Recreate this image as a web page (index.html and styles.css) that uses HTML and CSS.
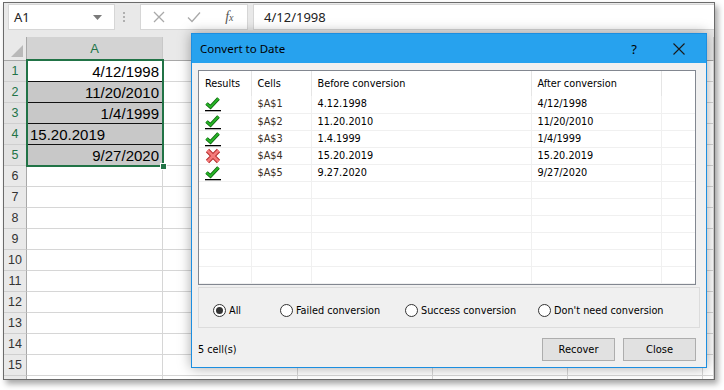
FILE: index.html
```html
<!DOCTYPE html>
<html>
<head>
<meta charset="utf-8">
<link rel="stylesheet" href="styles.css">
</head>
<body>
<div class="win">
  <div class="fbar">
    <div class="namebox"><span>A1</span><svg width="9" height="5" viewBox="0 0 9 5"><path d="M0 0 L9 0 L4.5 5 Z" fill="#7a7a7a"/></svg></div>
    <div class="dots"><i></i><i></i><i></i></div>
    <div class="fbtns">
      <span class="fb"><svg width="12" height="12" viewBox="0 0 12 12"><path d="M1 1 L11 11 M11 1 L1 11" stroke="#a9a9a9" stroke-width="1.3"/></svg></span>
      <span class="fb"><svg width="14" height="12" viewBox="0 0 14 12"><path d="M1 6.5 L5 10.5 L13 1.5" fill="none" stroke="#a9a9a9" stroke-width="1.3"/></svg></span>
      <span class="fb fx">f<sub>x</sub></span>
    </div>
    <div class="formula">4/12/1998</div>
  </div>
  <div class="sheet">
    <div class="row head">
      <div class="rh corner"><svg width="12" height="12" viewBox="0 0 12 12"><path d="M12 0 L12 12 L0 12 Z" fill="#b9b9b9"/></svg></div>
      <div class="c ca hsel">A</div><div class="c cb"></div><div class="c cb"></div><div class="c cb"></div><div class="c cb"></div><div class="c cf"></div>
    </div>
    <div class="row"><div class="rh rsel">1</div><div class="c ca act r line">4/12/1998</div><div class="c cb"></div><div class="c cb"></div><div class="c cb"></div><div class="c cb"></div><div class="c cf"></div></div>
    <div class="row"><div class="rh rsel">2</div><div class="c ca gsel r line">11/20/2010</div><div class="c cb"></div><div class="c cb"></div><div class="c cb"></div><div class="c cb"></div><div class="c cf"></div></div>
    <div class="row"><div class="rh rsel">3</div><div class="c ca gsel r line">1/4/1999</div><div class="c cb"></div><div class="c cb"></div><div class="c cb"></div><div class="c cb"></div><div class="c cf"></div></div>
    <div class="row"><div class="rh rsel">4</div><div class="c ca gsel line">15.20.2019</div><div class="c cb"></div><div class="c cb"></div><div class="c cb"></div><div class="c cb"></div><div class="c cf"></div></div>
    <div class="row"><div class="rh rsel">5</div><div class="c ca gsel r">9/27/2020</div><div class="c cb"></div><div class="c cb"></div><div class="c cb"></div><div class="c cb"></div><div class="c cf"></div></div>
    <div class="row"><div class="rh">6</div><div class="c ca"></div><div class="c cb"></div><div class="c cb"></div><div class="c cb"></div><div class="c cb"></div><div class="c cf"></div></div>
    <div class="row"><div class="rh">7</div><div class="c ca"></div><div class="c cb"></div><div class="c cb"></div><div class="c cb"></div><div class="c cb"></div><div class="c cf"></div></div>
    <div class="row"><div class="rh">8</div><div class="c ca"></div><div class="c cb"></div><div class="c cb"></div><div class="c cb"></div><div class="c cb"></div><div class="c cf"></div></div>
    <div class="row"><div class="rh">9</div><div class="c ca"></div><div class="c cb"></div><div class="c cb"></div><div class="c cb"></div><div class="c cb"></div><div class="c cf"></div></div>
    <div class="row"><div class="rh">10</div><div class="c ca"></div><div class="c cb"></div><div class="c cb"></div><div class="c cb"></div><div class="c cb"></div><div class="c cf"></div></div>
    <div class="row"><div class="rh">11</div><div class="c ca"></div><div class="c cb"></div><div class="c cb"></div><div class="c cb"></div><div class="c cb"></div><div class="c cf"></div></div>
    <div class="row"><div class="rh">12</div><div class="c ca"></div><div class="c cb"></div><div class="c cb"></div><div class="c cb"></div><div class="c cb"></div><div class="c cf"></div></div>
    <div class="row"><div class="rh">13</div><div class="c ca"></div><div class="c cb"></div><div class="c cb"></div><div class="c cb"></div><div class="c cb"></div><div class="c cf"></div></div>
    <div class="row"><div class="rh">14</div><div class="c ca"></div><div class="c cb"></div><div class="c cb"></div><div class="c cb"></div><div class="c cb"></div><div class="c cf"></div></div>
    <div class="row"><div class="rh">15</div><div class="c ca"></div><div class="c cb"></div><div class="c cb"></div><div class="c cb"></div><div class="c cb"></div><div class="c cf"></div></div>
    <div class="row"><div class="rh"></div><div class="c ca"></div><div class="c cb"></div><div class="c cb"></div><div class="c cb"></div><div class="c cb"></div><div class="c cf"></div></div>
    <div class="selbox"><span class="handle"></span></div>
  </div>
</div>

<div class="dlg">
  <div class="title">
    <span>Convert to Date</span>
    <span class="help">?</span>
    <svg class="close" width="12" height="12" viewBox="0 0 12 12"><path d="M0.5 0.5 L11.5 11.5 M11.5 0.5 L0.5 11.5" stroke="#1a1a1a" stroke-width="1.1"/></svg>
  </div>
  <div class="list">
    <table>
      <colgroup><col class="w1"><col class="w2"><col class="w3"><col class="w4"><col class="w5"></colgroup>
      <thead><tr><th>Results</th><th>Cells</th><th>Before conversion</th><th>After conversion</th><th></th></tr></thead>
      <tbody>
        <tr><td><svg class="ok" width="16" height="16" viewBox="0 0 16 16"><path d="M1.5 7.5 L5.5 11 L13.5 2.5" fill="none" stroke="#0b5e0b" stroke-width="3.6"/><path d="M1.5 7.5 L5.5 11 L13.5 2.5" fill="none" stroke="#27b427" stroke-width="2"/><rect x="0" y="14" width="16" height="1.3" fill="#000"/></svg></td><td class="ref">$A$1</td><td>4.12.1998</td><td>4/12/1998</td><td></td></tr>
        <tr><td><svg class="ok" width="16" height="16" viewBox="0 0 16 16"><path d="M1.5 7.5 L5.5 11 L13.5 2.5" fill="none" stroke="#0b5e0b" stroke-width="3.6"/><path d="M1.5 7.5 L5.5 11 L13.5 2.5" fill="none" stroke="#27b427" stroke-width="2"/><rect x="0" y="14" width="16" height="1.3" fill="#000"/></svg></td><td class="ref">$A$2</td><td>11.20.2010</td><td>11/20/2010</td><td></td></tr>
        <tr><td><svg class="ok" width="16" height="16" viewBox="0 0 16 16"><path d="M1.5 7.5 L5.5 11 L13.5 2.5" fill="none" stroke="#0b5e0b" stroke-width="3.6"/><path d="M1.5 7.5 L5.5 11 L13.5 2.5" fill="none" stroke="#27b427" stroke-width="2"/><rect x="0" y="14" width="16" height="1.3" fill="#000"/></svg></td><td class="ref">$A$3</td><td>1.4.1999</td><td>1/4/1999</td><td></td></tr>
        <tr><td><svg class="ok" width="16" height="16" viewBox="0 0 16 16"><path d="M2.5 2.5 L13.5 13.5 M13.5 2.5 L2.5 13.5" stroke="#b52a2a" stroke-width="4.6"/><path d="M2.5 2.5 L13.5 13.5 M13.5 2.5 L2.5 13.5" stroke="#f47a7a" stroke-width="2.8"/></svg></td><td class="ref">$A$4</td><td>15.20.2019</td><td>15.20.2019</td><td></td></tr>
        <tr><td><svg class="ok" width="16" height="16" viewBox="0 0 16 16"><path d="M1.5 7.5 L5.5 11 L13.5 2.5" fill="none" stroke="#0b5e0b" stroke-width="3.6"/><path d="M1.5 7.5 L5.5 11 L13.5 2.5" fill="none" stroke="#27b427" stroke-width="2"/><rect x="0" y="14" width="16" height="1.3" fill="#000"/></svg></td><td class="ref">$A$5</td><td>9.27.2020</td><td>9/27/2020</td><td></td></tr>
        <tr><td></td><td></td><td></td><td></td><td></td></tr>
        <tr><td></td><td></td><td></td><td></td><td></td></tr>
        <tr><td></td><td></td><td></td><td></td><td></td></tr>
        <tr><td></td><td></td><td></td><td></td><td></td></tr>
        <tr><td></td><td></td><td></td><td></td><td></td></tr>
        <tr><td></td><td></td><td></td><td></td><td></td></tr>
      </tbody>
    </table>
  </div>
  <div class="group">
    <label class="radio r1"><span class="dot on"></span>All</label>
    <label class="radio r2"><span class="dot"></span>Failed conversion</label>
    <label class="radio r3"><span class="dot"></span>Success conversion</label>
    <label class="radio r4"><span class="dot"></span>Don't need conversion</label>
  </div>
  <div class="footer">
    <span>5 cell(s)</span>
    <button class="btn first">Recover</button>
    <button class="btn">Close</button>
  </div>
</div>
</body>
</html>
```

FILE: styles.css
```css
* { box-sizing: border-box; }
body {
  margin: 0;
  background: #fff;
  position: relative;
  width: 724px;
  height: 390px;
  overflow: hidden;
  font-family: "Liberation Sans", sans-serif;
}
.win {
  margin: 2px 0 0 3px;
  width: 712px;
  height: 378px;
  border: 1px solid #6b6b6b;
  box-shadow: 3px 4px 6px rgba(0,0,0,0.35);
  overflow: hidden;
  background: #fff;
  position: relative;
}
.fbar {
  height: 34px;
  background: #e9e9e9;
  display: flex;
  align-items: flex-start;
  padding: 1px 0 0 4px;
}
.namebox {
  width: 107px;
  height: 26px;
  background: #fff;
  border: 1px solid #d6d6d6;
  display: flex;
  align-items: center;
  justify-content: space-between;
  padding: 0 12px 0 5px;
  font: 13px "Noto Sans", sans-serif;
  color: #222;
}
.dots {
  width: 25px;
  height: 26px;
  display: flex;
  flex-direction: column;
  align-items: center;
  justify-content: center;
  gap: 2px;
  padding-right: 7px;
}
.dots i { width: 2px; height: 2px; background: #b0b0b0; display: block; }
.fbtns {
  width: 108px;
  height: 26px;
  background: #fff;
  border: 1px solid #d6d6d6;
  display: flex;
  align-items: center;
}
.fb { width: 36px; display: flex; justify-content: center; align-items: center; }
.fx { font: italic 14px "Liberation Serif", serif; color: #555; }
.fx sub { font-size: 10px; vertical-align: -1px; }
.formula {
  flex: 1;
  margin-left: 5px;
  height: 26px;
  background: #fff;
  border: 1px solid #d6d6d6;
  border-right: none;
  padding-left: 10px;
  font: 13px/24px "Noto Sans", sans-serif;
  color: #222;
}
.sheet { position: relative; }
.row { display: flex; height: 21px; }
.row.head { height: 24px; }
.rh {
  width: 23px;
  flex: none;
  background: #e9e9e9;
  border-right: 1px solid #a8a8a8;
  border-bottom: 1px solid #cfcfcf;
  font: 12.5px/21px "Liberation Sans", sans-serif;
  color: #333;
  text-align: center;
}
.rh.rsel { color: #217346; background: #e2e2e2; }
.corner {
  background: #e9e9e9;
  border-bottom: 1px solid #a8a8a8;
  display: flex;
  align-items: flex-end;
  justify-content: flex-end;
  padding: 0 3px 3px 0;
}
.c {
  border-right: 1px solid #d6d6d6;
  border-bottom: 1px solid #d6d6d6;
  font: 15px/21px "Liberation Sans", sans-serif;
  color: #000;
  padding: 0 3px;
  white-space: nowrap;
  overflow: hidden;
}
.ca { width: 136px; flex: none; }
.cb { width: 135px; flex: none; }
.cf { flex: 1; }
.head .c {
  background: #e9e9e9;
  border-bottom: 1px solid #a8a8a8;
  border-right: 1px solid #c8c8c8;
  font: 13px/23px "Liberation Sans", sans-serif;
  text-align: center;
  color: #333;
}
.head .c.hsel {
  background: #d3d3d3;
  color: #217346;
  border-bottom: 2px solid #217346;
}
.r { text-align: right; }
.gsel { background: #c8c8c8; }
.act { background: #fff; }
.line { border-bottom: 1px solid #111; }
.selbox {
  position: absolute;
  left: 22px;
  top: 22px;
  width: 138px;
  height: 108px;
  border: 2px solid #217346;
}
.handle {
  position: absolute;
  right: -5px;
  bottom: -5px;
  width: 7px;
  height: 7px;
  background: #217346;
  border: 1px solid #fff;
}

.dlg {
  position: absolute;
  left: 191px;
  top: 33px;
  width: 516px;
  height: 335px;
  background: #f0f0f0;
  border: 1px solid #1c8ee0;
  box-shadow: 0 0 12px rgba(0,0,0,0.35);
  font: 10.8px "DejaVu Sans Condensed", "DejaVu Sans", sans-serif;
  color: #000;
}
.title {
  height: 29px;
  background: #27a2ee;
  display: flex;
  align-items: center;
  padding: 0 21px 0 8px;
  font: 11.5px "Noto Sans", sans-serif;
  color: #000;
}
.help { margin-left: auto; margin-right: 36px; font: 13px "Noto Sans", sans-serif; }
.list {
  margin: 7px 0 0 6px;
  width: 498px;
  height: 215px;
  border: 1px solid #828790;
  background: #fff;
  overflow: hidden;
}
table { border-collapse: collapse; table-layout: fixed; width: 496px; }
.w1 { width: 52px; } .w2 { width: 60px; } .w3 { width: 220px; } .w4 { width: 130px; } .w5 { width: 34px; }
th {
  height: 25px;
  text-align: left;
  font-weight: normal;
  padding: 0 0 0 6px;
  border-right: 1px solid #e5e5e5;
  white-space: nowrap;
}
th:last-child { border-right: none; }
td {
  height: 17px;
  padding: 0 0 0 6px;
  border-right: 1px solid #f0f0f0;
  border-bottom: 1px solid #f0f0f0;
  white-space: nowrap;
  line-height: 16px;
}
td:last-child { border-right: none; }
td .ok { display: block; }
.ref { color: #3a2e22; }
.group {
  margin: 2px 6px 0 6px;
  height: 41px;
  border: 1px solid #dcdcdc;
  display: flex;
  align-items: center;
  padding: 5px 0 0 14px;
}
.radio { display: flex; align-items: center; white-space: nowrap; }
.r1 { width: 67px; } .r2 { width: 125px; } .r3 { width: 133px; }
.dot {
  width: 13px;
  height: 13px;
  border: 1px solid #333;
  border-radius: 50%;
  background: #fff;
  margin-right: 3px;
  display: flex;
  align-items: center;
  justify-content: center;
}
.dot.on::after {
  content: "";
  width: 7px;
  height: 7px;
  border-radius: 50%;
  background: #333;
}
.footer {
  margin-top: 10px;
  height: 23px;
  display: flex;
  align-items: center;
  padding: 0 10px 0 6px;
}
.btn {
  width: 73px;
  height: 23px;
  background: #e1e1e1;
  border: 1px solid #adadad;
  font: 11px "DejaVu Sans Condensed", "DejaVu Sans", sans-serif;
  color: #000;
  padding: 0;
  margin-left: 8px;
}
.btn.first { margin-left: auto; }
```
